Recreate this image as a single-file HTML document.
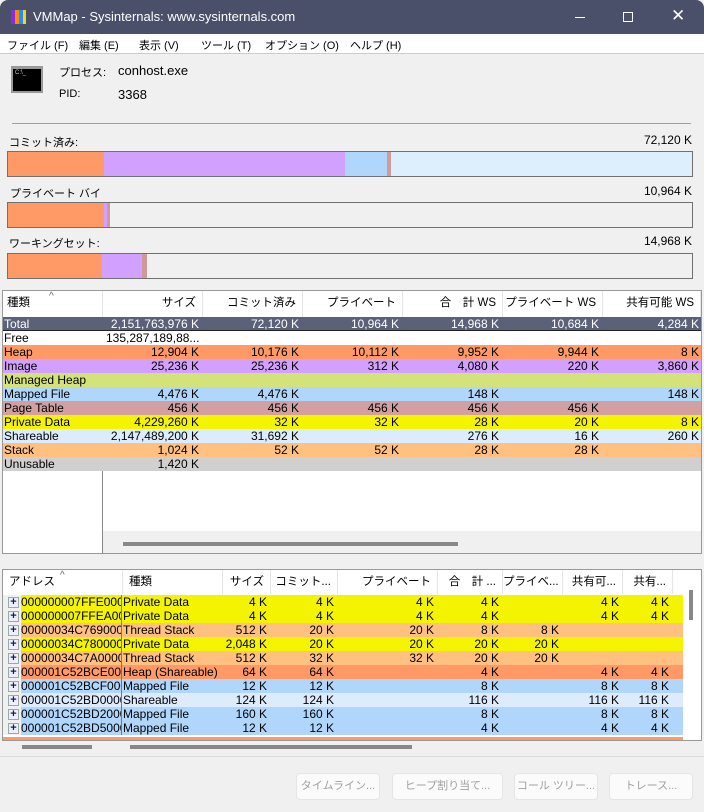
<!DOCTYPE html>
<html><head><meta charset="utf-8"><style>
*{margin:0;padding:0;box-sizing:border-box}
body{width:704px;height:812px;background:#f0f0f0;position:relative;overflow:hidden;font-family:"Liberation Sans","Noto Sans CJK JP",sans-serif;font-size:12px;color:#000}
.a{position:absolute}
.title{left:0;top:0;width:704px;height:34px;background:#4a4f6a;color:#fff;font-size:13px;border-radius:8px 8px 0 0}
.menu{left:0;top:34px;width:704px;height:20px;background:#fff;border-bottom:1px solid #ccc}
.menu span{position:absolute;top:3px;font-size:11px;white-space:nowrap}
.bar{height:26px;border:1px solid #707070;background:#f0f0f0;left:7px;width:686px;overflow:hidden}
.bar div{position:absolute;top:0;height:24px}
.lbl{font-size:11px}
.tbl{background:#fff}
.row{position:absolute;left:0;height:14px;line-height:14px;white-space:nowrap;overflow:hidden}
.c{position:absolute;top:0;height:14px;text-align:right;overflow:hidden;white-space:nowrap}
.l{text-align:left}
.hd{position:absolute;height:100%;border-right:1px solid #e5e5e5;text-align:right;padding-right:6px;line-height:24px;white-space:nowrap;overflow:hidden;font-size:11.5px}
.btn{position:absolute;top:773px;height:27px;background:#fbfbfb;border:1px solid #e5e5e5;border-radius:4px;color:#a0a0a0;text-align:center;line-height:25px;font-size:11px;white-space:nowrap;overflow:hidden}
.plus{position:absolute;left:5px;top:2px;width:11px;height:11px;border:1px solid #9aa;background:#eef;color:#124;font-size:11px;line-height:9px;text-align:center;font-weight:bold}
</style></head><body>
<div class="a title">
<div class="a" style="left:11px;top:10px;width:4px;height:14px;background:#8a2be2"></div>
<div class="a" style="left:15px;top:10px;width:4px;height:14px;background:#ff8c00"></div>
<div class="a" style="left:19px;top:10px;width:4px;height:14px;background:#1e90ff"></div>
<div class="a" style="left:23px;top:10px;width:3px;height:14px;background:#ffd700"></div>
<span class="a" style="left:33px;top:9px">VMMap - Sysinternals: www.sysinternals.com</span>
<div class="a" style="left:575px;top:17px;width:10px;height:1px;background:#fff"></div>
<div class="a" style="left:623px;top:12px;width:10px;height:10px;border:1px solid #fff"></div>
<span class="a" style="left:671px;top:6px;font-size:17px;font-weight:100">✕</span>
</div>
<div class="a menu">
<span style="left:7px">ファイル (F)</span><span style="left:79px">編集 (E)</span><span style="left:139px">表示 (V)</span><span style="left:201px">ツール (T)</span><span style="left:265px">オプション (O)</span><span style="left:350px">ヘルプ (H)</span>
</div>
<div class="a" style="left:11px;top:66px;width:32px;height:27px;background:#000;border:2px solid #999;border-top-width:3px"><span style="color:#ccc;font-size:6px;position:absolute;left:2px;top:1px">C:\_</span></div>
<span class="a lbl" style="left:59px;top:64px">プロセス:</span><span class="a" style="left:118px;top:63px;font-size:13px">conhost.exe</span>
<span class="a lbl" style="left:59px;top:88px">PID:</span><span class="a" style="left:118px;top:87px;font-size:13px">3368</span>
<div class="a" style="left:12px;top:123px;width:679px;height:1px;background:#a0a0a0"></div>
<span class="a lbl" style="left:9px;top:134px">コミット済み:</span><span class="a" style="right:12px;top:133px">72,120 K</span>
<div class="a bar" style="top:151px;background:#ddeefc"><div style="left:0;width:96px;background:#ff9966"></div><div style="left:96px;width:241px;background:#d2a0ff"></div><div style="left:337px;width:42px;background:#b0d6fc"></div><div style="left:379px;width:4px;background:#d09a9a"></div></div>
<span class="a lbl" style="left:10px;top:185px">プライベート バイ</span><span class="a" style="right:12px;top:184px">10,964 K</span>
<div class="a bar" style="top:202px"><div style="left:0;width:96px;background:#ff9966"></div><div style="left:96px;width:3px;background:#d2a0ff"></div><div style="left:99px;width:3px;background:#d09a9a"></div></div>
<span class="a lbl" style="left:9px;top:235px">ワーキングセット:</span><span class="a" style="right:12px;top:234px">14,968 K</span>
<div class="a bar" style="top:253px"><div style="left:0;width:94px;background:#ff9966"></div><div style="left:94px;width:40px;background:#d2a0ff"></div><div style="left:134px;width:5px;background:#d09a9a"></div></div>

<div class="a tbl" style="left:2px;top:290px;width:700px;height:264px;border:1px solid #999">
<div class="a" style="left:0;top:0;width:698px;height:26px;background:#fff">
<div class="hd" style="left:0;width:100px;text-align:left;padding-left:4px">種類<span style="position:absolute;left:46px;top:-6px;font-size:10px;color:#666">^</span></div>
<div class="hd" style="left:100px;width:100px">サイズ</div>
<div class="hd" style="left:200px;width:100px">コミット済み</div>
<div class="hd" style="left:300px;width:100px">プライベート</div>
<div class="hd" style="left:400px;width:100px">合　計 WS</div>
<div class="hd" style="left:500px;width:100px">プライベート WS</div>
<div class="hd" style="left:600px;width:98px">共有可能 WS</div>
</div>
<div class="a" style="left:99px;top:40px;width:1px;height:222px;background:#888"></div>
<div class="a" style="left:100px;top:240px;width:598px;height:22px;background:#f0f0f0"><div class="a" style="left:20px;top:11px;width:335px;height:4px;background:#888"></div></div>
</div>
<div id="t1"></div>
<div class="a tbl" style="left:2px;top:569px;width:700px;height:172px;border:1px solid #999">
<div class="a" style="left:0;top:0;width:670px;height:24px;background:#fff">
<div class="hd" style="left:0;width:120px;text-align:left;padding-left:6px">アドレス<span style="position:absolute;left:57px;top:-6px;font-size:10px;color:#666">^</span></div>
<div class="hd" style="left:120px;width:100px;text-align:left;padding-left:6px">種類</div>
<div class="hd" style="left:220px;width:48px">サイズ</div>
<div class="hd" style="left:268px;width:67px">コミット...</div>
<div class="hd" style="left:335px;width:100px">プライベート</div>
<div class="hd" style="left:435px;width:65px">合　計 ...</div>
<div class="hd" style="left:500px;width:60px">プライベ...</div>
<div class="hd" style="left:560px;width:60px">共有可...</div>
<div class="hd" style="left:620px;width:50px">共有...</div>
</div>
<div class="a" style="left:686px;top:20px;width:4px;height:30px;background:#888"></div>
<div class="a" style="left:0;top:167px;width:680px;height:3px;background:#ff9966"></div>
</div>
<div id="t2"></div>
<div class="a" style="left:22px;top:745px;width:70px;height:4px;background:#888"></div>
<div class="a" style="left:130px;top:745px;width:282px;height:4px;background:#888"></div>
<div class="a" style="left:0;top:756px;width:704px;height:1px;background:#ddd"></div>
<div class="btn" style="left:296px;width:84px">タイムライン...</div>
<div class="btn" style="left:392px;width:111px">ヒープ割り当て...</div>
<div class="btn" style="left:514px;width:84px">コール ツリー...</div>
<div class="btn" style="left:609px;width:84px">トレース...</div>
<script>
var H='#ff9966',I='#d2a0ff',M='#d4e27a',F='#b0d6fc',P='#d2a0a0',Y='#f4f400',S='#dcecfc',T='#ffc080',U='#d0d0d0';
var r1=[['#5a6178','Total','2,151,763,976 K','72,120 K','10,964 K','14,968 K','10,684 K','4,284 K'],
['#fff','Free','135,287,189,88...','','','','',''],
[H,'Heap','12,904 K','10,176 K','10,112 K','9,952 K','9,944 K','8 K'],
[I,'Image','25,236 K','25,236 K','312 K','4,080 K','220 K','3,860 K'],
[M,'Managed Heap','','','','','',''],
[F,'Mapped File','4,476 K','4,476 K','','148 K','','148 K'],
[P,'Page Table','456 K','456 K','456 K','456 K','456 K',''],
[Y,'Private Data','4,229,260 K','32 K','32 K','28 K','20 K','8 K'],
[S,'Shareable','2,147,489,200 K','31,692 K','','276 K','16 K','260 K'],
[T,'Stack','1,024 K','52 K','52 K','28 K','28 K',''],
[U,'Unusable','1,420 K','','','','','']];
var h='';
r1.forEach(function(r,i){var y=317+i*14;h+='<div class="row" style="left:3px;top:'+y+'px;width:698px;background:'+r[0]+(i==0?';color:#fff;border-bottom:2px solid #222;height:15px':'')+'">';
h+='<div class="c l" style="left:1px;width:98px">'+r[1]+'</div>';
for(var k=2;k<8;k++){var x=100*(k-1);h+='<div class="c" style="left:'+x+'px;width:100px;padding-right:4px;'+(i==1&&k==2?'text-align:left;padding-left:3px':'')+'">'+r[k]+'</div>';}
h+='</div>';});
document.getElementById('t1').innerHTML=h;
var r2=[[Y,'000000007FFE000','Private Data','4 K','4 K','4 K','4 K','','4 K','4 K'],
[Y,'000000007FFEA00','Private Data','4 K','4 K','4 K','4 K','','4 K','4 K'],
[T,'00000034C769000','Thread Stack','512 K','20 K','20 K','8 K','8 K','',''],
[Y,'00000034C780000','Private Data','2,048 K','20 K','20 K','20 K','20 K','',''],
[T,'00000034C7A0000','Thread Stack','512 K','32 K','32 K','20 K','20 K','',''],
[H,'000001C52BCE000','Heap (Shareable)','64 K','64 K','','4 K','','4 K','4 K'],
[F,'000001C52BCF000','Mapped File','12 K','12 K','','8 K','','8 K','8 K'],
[S,'000001C52BD0000','Shareable','124 K','124 K','','116 K','','116 K','116 K'],
[F,'000001C52BD2000','Mapped File','160 K','160 K','','8 K','','8 K','8 K'],
[F,'000001C52BD5000','Mapped File','12 K','12 K','','4 K','','4 K','4 K']];
var cols=[[222,48],[270,67],[337,100],[437,65],[502,60],[562,60],[622,50]];
h='';
r2.forEach(function(r,i){var y=595+i*14;h+='<div class="row" style="left:3px;top:'+y+'px;width:680px;background:linear-gradient(90deg,#f0f0f0 0,#f0f0f0 18px,'+r[0]+' 18px)">';
h+='<div class="plus">+</div><div class="c l" style="left:18px;width:101px;border-right:1px solid #777">'+r[1]+'</div><div class="c l" style="left:120px;width:100px">'+r[2]+'</div>';
cols.forEach(function(c,k){h+='<div class="c" style="left:'+(c[0]-2)+'px;width:'+c[1]+'px;padding-right:4px">'+r[k+3]+'</div>';});
h+='</div>';});
document.getElementById('t2').innerHTML=h;
</script>
</body></html>
